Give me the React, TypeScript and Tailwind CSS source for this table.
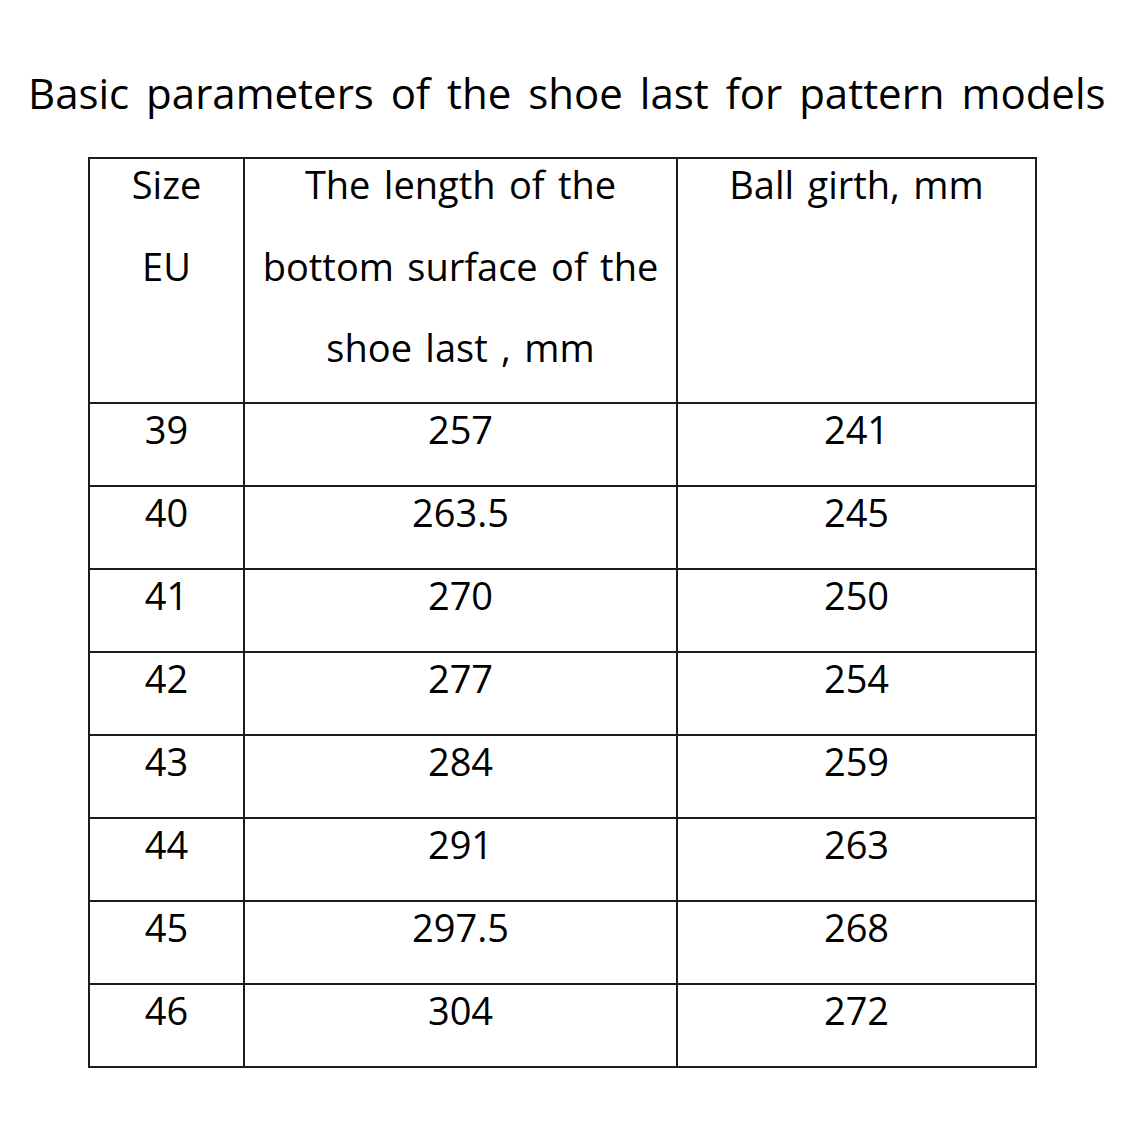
const rows: [string, string, string][] = [
  ["39", "257", "241"],
  ["40", "263.5", "245"],
  ["41", "270", "250"],
  ["42", "277", "254"],
  ["43", "284", "259"],
  ["44", "291", "263"],
  ["45", "297.5", "268"],
  ["46", "304", "272"],
];

function HeaderCell({ lines, className }: { lines: string[]; className?: string }) {
  return (
    <td className={"border-2 border-[#1c1c1c] p-0 align-top text-center " + (className ?? "")}>
      <div className="flex flex-col gap-[31.5px]">
        {lines.map((l) => (
          <div key={l} className="leading-[50px] whitespace-nowrap">
            {l}
          </div>
        ))}
      </div>
    </td>
  );
}

export default function App() {
  return (
    <div
      className="w-[1140px] h-[1121px] bg-white text-black overflow-hidden"
      style={{ fontFamily: "'Open Sans', Lato, sans-serif" }}
    >
      {/* Title */}
      <h1 className="pt-[68px] pl-[28px] text-[42px] leading-[50px] font-normal whitespace-nowrap [word-spacing:6px]">
        Basic parameters of the shoe last for pattern models
      </h1>

      {/* Table */}
      <div className="pl-[88px] pt-[39px]">
        <table className="border-collapse text-[38px] table-fixed w-[947px] [word-spacing:3.5px]">
          <colgroup>
            <col className="w-[155px]" />
            <col className="w-[433px]" />
            <col className="w-[359px]" />
          </colgroup>
          <thead>
            <tr className="h-[245px]">
              <HeaderCell lines={["Size", "EU"]} />
              <HeaderCell lines={["The length of the", "bottom surface of the", "shoe last , mm"]} />
              <HeaderCell lines={["Ball girth, mm"]} />
            </tr>
          </thead>
          <tbody>
            {rows.map(([size, len, girth]) => (
              <tr key={size} className="h-[83px]">
                <td className="border-2 border-[#1c1c1c] p-0 align-top text-center leading-[50px]">{size}</td>
                <td className="border-2 border-[#1c1c1c] p-0 align-top text-center leading-[50px]">{len}</td>
                <td className="border-2 border-[#1c1c1c] p-0 align-top text-center leading-[50px]">{girth}</td>
              </tr>
            ))}
          </tbody>
        </table>
      </div>
    </div>
  );
}
